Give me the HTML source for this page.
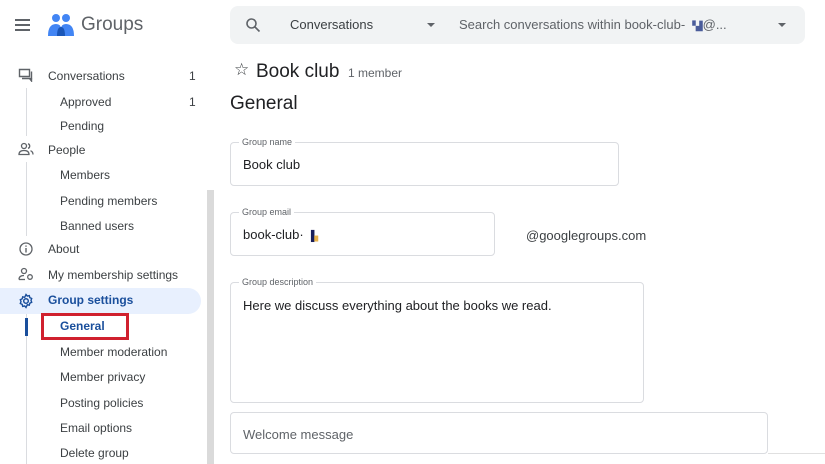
<!DOCTYPE html>
<html><head><style>
*{margin:0;padding:0;box-sizing:border-box}
body{width:825px;height:464px;overflow:hidden;background:#fff;font-family:"Liberation Sans",Arial,sans-serif;color:#202124;position:relative}
.a{position:absolute;white-space:nowrap}
.nav{font-size:12px;color:#3c4043}
.box{position:absolute;border:1px solid #dadce0;border-radius:4px}
.lbl{position:absolute;top:-6px;left:8px;background:#fff;padding:0 3px;font-size:9px;color:#5f6368}
.val{position:absolute;left:12px;font-size:13px;color:#202124}
</style></head><body>
<div class="a" style="left:15px;top:19px;width:15px;height:2px;background:#5f6368"></div>
<div class="a" style="left:15px;top:24px;width:15px;height:2px;background:#5f6368"></div>
<div class="a" style="left:15px;top:29px;width:15px;height:2px;background:#5f6368"></div>
<svg class="a" style="left:47px;top:13px" width="28" height="24" viewBox="0 0 28 24">
<circle cx="9" cy="5" r="4" fill="#4285f4"/><circle cx="19" cy="5" r="4" fill="#4285f4"/>
<path d="M1 23 Q1 11 9 11 Q14 11 14 16 Q14 11 19 11 Q27 11 27 23Z" fill="#4285f4"/>
<path d="M10 23 Q10 14 14 14 Q18 14 18 23Z" fill="#1a56b8"/>
</svg>
<div class="a" style="left:81px;top:14px;font-size:19px;color:#5f6368">Groups</div>
<div class="a" style="left:230px;top:6px;width:575px;height:38px;background:#f1f3f4;border-radius:8px"></div>
<svg class="a" style="left:245px;top:17px" width="16" height="16" viewBox="0 0 16 16"><circle cx="6.5" cy="6.5" r="4.5" fill="none" stroke="#5f6368" stroke-width="1.6"/><path d="M10 10l4.5 4.5" stroke="#5f6368" stroke-width="1.6"/></svg>
<div class="a" style="left:290px;top:17px;font-size:13px;color:#3c4043">Conversations</div>
<div class="a" style="left:427px;top:23px;border:4px solid transparent;border-top:4px solid #5f6368"></div>
<div class="a" style="left:459px;top:17px;font-size:13px;color:#5f6368">Search conversations within book-club- <span style="font-size:9px;color:#4a5c9a">▝▟</span>@...</div>
<div class="a" style="left:778px;top:23px;border:4px solid transparent;border-top:4px solid #5f6368"></div>
<svg class="a" style="left:18px;top:68px" width="16" height="14" viewBox="0 0 16 14"><path d="M1.5 1.5h10v7h-10z M4 10.5h9.5v-7" fill="none" stroke="#5f6368" stroke-width="1.4"/><path d="M13.5 10.5v2.5l-2-2.5" fill="none" stroke="#5f6368" stroke-width="1.4"/></svg>
<div class="a nav" style="left:48px;top:69px">Conversations</div><div class="a nav" style="left:189px;top:69px">1</div>
<div class="a" style="left:26px;top:88px;width:1px;height:48px;background:#dadce0"></div>
<div class="a nav" style="left:60px;top:95px">Approved</div><div class="a nav" style="left:189px;top:95px">1</div>
<div class="a nav" style="left:60px;top:119px">Pending</div>
<svg class="a" style="left:18px;top:142px" width="16" height="14" viewBox="0 0 16 14"><circle cx="6" cy="4" r="2.5" fill="none" stroke="#5f6368" stroke-width="1.3"/><path d="M1 12.5q0-4 5-4t5 4z" fill="none" stroke="#5f6368" stroke-width="1.3"/><path d="M10 1.8a2.4 2.4 0 010 4.6M12.5 8.7q2.5 1 2.5 3.8" fill="none" stroke="#5f6368" stroke-width="1.3"/></svg>
<div class="a nav" style="left:48px;top:143px">People</div>
<div class="a" style="left:26px;top:162px;width:1px;height:74px;background:#dadce0"></div>
<div class="a nav" style="left:60px;top:168px">Members</div>
<div class="a nav" style="left:60px;top:194px">Pending members</div>
<div class="a nav" style="left:60px;top:219px">Banned users</div>
<svg class="a" style="left:19px;top:242px" width="14" height="14" viewBox="0 0 14 14"><circle cx="7" cy="7" r="6" fill="none" stroke="#5f6368" stroke-width="1.3"/><path d="M7 6v4.5M7 3.5v1.3" stroke="#5f6368" stroke-width="1.4"/></svg>
<div class="a nav" style="left:48px;top:242px">About</div>
<svg class="a" style="left:18px;top:267px" width="16" height="14" viewBox="0 0 16 14"><circle cx="6" cy="4" r="2.5" fill="none" stroke="#5f6368" stroke-width="1.3"/><path d="M1 12.5q0-4 5-4" fill="none" stroke="#5f6368" stroke-width="1.3"/><path d="M1 12.5h6" stroke="#5f6368" stroke-width="1.3"/><circle cx="12" cy="10" r="2.3" fill="none" stroke="#5f6368" stroke-width="1.3"/></svg>
<div class="a nav" style="left:48px;top:268px">My membership settings</div>
<div class="a" style="left:0;top:288px;width:201px;height:26px;background:#e8f0fe;border-radius:0 13px 13px 0"></div>
<svg class="a" style="left:18px;top:293px" width="16" height="16" viewBox="0 0 16 16"><circle cx="8" cy="8" r="2.3" fill="none" stroke="#1a4f9c" stroke-width="1.5"/><path d="M8 1.5l1.3 1.6 2-.5.5 2 1.9.9-.7 1.9.7 1.9-1.9.9-.5 2-2-.5L8 14.5l-1.3-1.6-2 .5-.5-2-1.9-.9.7-1.9-.7-1.9 1.9-.9.5-2 2 .5z" fill="none" stroke="#1a4f9c" stroke-width="1.4"/></svg>
<div class="a" style="left:48px;top:293px;font-size:12px;font-weight:bold;color:#1a4f9c">Group settings</div>
<div class="a" style="left:26px;top:314px;width:1px;height:150px;background:#dadce0"></div>
<div class="a" style="left:25px;top:318px;width:3px;height:18px;background:#1a4f9c"></div>
<div class="a" style="left:41px;top:313px;width:88px;height:27px;border:3px solid #d0202e"></div>
<div class="a" style="left:60px;top:319px;font-size:12px;font-weight:bold;color:#1a4f9c">General</div>
<div class="a nav" style="left:60px;top:345px">Member moderation</div>
<div class="a nav" style="left:60px;top:370px">Member privacy</div>
<div class="a nav" style="left:60px;top:396px">Posting policies</div>
<div class="a nav" style="left:60px;top:421px">Email options</div>
<div class="a nav" style="left:60px;top:446px">Delete group</div>
<div class="a" style="left:207px;top:190px;width:7px;height:274px;background:#dadada"></div>
<div class="a" style="left:234px;top:60px;font-size:17px;color:#3c4043">☆</div>
<div class="a" style="left:256px;top:61px;font-size:19px;color:#202124">Book club</div>
<div class="a" style="left:348px;top:66px;font-size:12px;color:#5f6368">1 member</div>
<div class="a" style="left:230px;top:93px;font-size:19px;color:#202124">General</div>
<div class="box" style="left:230px;top:142px;width:389px;height:44px"><span class="lbl">Group name</span><span class="val" style="top:14px">Book club</span></div>
<div class="box" style="left:230px;top:212px;width:265px;height:44px"><span class="lbl">Group email</span><span class="val" style="top:14px">book-club· <span style="font-size:10px;color:#1a1f5a">▐</span><span style="font-size:10px;color:#e8b24a">▖</span></span></div>
<div class="a" style="left:526px;top:228px;font-size:13px;color:#3c4043">@googlegroups.com</div>
<div class="box" style="left:230px;top:282px;width:414px;height:121px"><span class="lbl">Group description</span><span class="val" style="top:15px">Here we discuss everything about the books we read.</span></div>
<div class="box" style="left:230px;top:412px;width:538px;height:42px"><span class="val" style="top:14px;color:#5f6368">Welcome message</span></div>
<div class="a" style="left:768px;top:453px;width:57px;height:1px;background:#e0e0e0"></div>
</body></html>
